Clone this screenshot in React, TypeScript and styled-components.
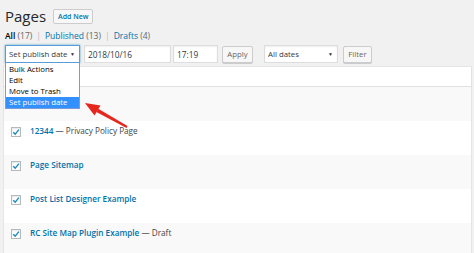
import styled, { createGlobalStyle } from "styled-components";

const GlobalStyle = createGlobalStyle`
  html, body {
    margin: 0;
    padding: 0;
    background: #f1f1f1;
    font-family: "Open Sans", "Noto Sans", sans-serif;
    color: #444;
  }
`;

const Screen = styled.div`
  position: relative;
  width: 474px;
  height: 253px;
  overflow: hidden;
  background: #f1f1f1;
`;

const Top = styled.div`
  padding: 8px 0 0 5px;
  height: 58px;
  box-sizing: border-box;
`;

const TitleRow = styled.div`
  display: flex;
  align-items: center;
  gap: 7px;
`;

const Heading = styled.h1`
  margin: 0;
  font-size: 15px;
  font-weight: 400;
  line-height: 16px;
  color: #23282d;
`;

const AddNew = styled.button`
  height: 15px;
  padding: 0 4px;
  border: 1px solid #ccc;
  border-radius: 2px;
  background: #f7f7f7;
  color: #0073aa;
  font-family: inherit;
  font-size: 7px;
  font-weight: 600;
  line-height: 13px;
`;

const Views = styled.div`
  margin-top: 7px;
  font-size: 8.5px;
  line-height: 10px;
  color: #666;
  white-space: nowrap;
`;

const ViewLink = styled.span<{ $current?: boolean }>`
  color: ${(p) => (p.$current ? "#000" : "#0073aa")};
  font-weight: ${(p) => (p.$current ? 600 : 400)};
`;

const Sep = styled.span`
  color: #bbb;
  margin: 0 4px;
`;

const Nav = styled.div`
  display: flex;
  align-items: center;
  height: 18px;
  padding-left: 5px;
  margin-top: -13px;
`;

const SelectWrap = styled.div`
  position: relative;
`;

const Select = styled.div<{ $w: number; $focus?: boolean }>`
  width: ${(p) => p.$w}px;
  height: 18px;
  box-sizing: border-box;
  display: flex;
  align-items: center;
  justify-content: space-between;
  padding: 0 4px 0 3px;
  background: #fff;
  border: 1px solid ${(p) => (p.$focus ? "#5b9dd9" : "#ddd")};
  box-shadow: ${(p) => (p.$focus ? "0 0 2px rgba(30,140,190,.8)" : "inset 0 1px 2px rgba(0,0,0,.07)")};
  font-size: 7.8px;
  color: #32373c;
  white-space: nowrap;
`;

const Caret = styled.span`
  font-size: 5px;
  color: #333;
`;

const Input = styled.div<{ $w: number; $ml: number }>`
  width: ${(p) => p.$w}px;
  margin-left: ${(p) => p.$ml}px;
  height: 18px;
  box-sizing: border-box;
  display: flex;
  align-items: center;
  padding: 0 3px;
  background: #fff;
  border: 1px solid #ddd;
  box-shadow: inset 0 1px 2px rgba(0,0,0,.07);
  font-size: 8.3px;
  color: #32373c;
`;

const Button = styled.button<{ $ml: number; $w: number }>`
  margin-left: ${(p) => p.$ml}px;
  width: ${(p) => p.$w}px;
  height: 17px;
  padding: 0;
  background: #f7f7f7;
  border: 1px solid #ccc;
  border-radius: 2px;
  box-shadow: 0 1px 0 #ccc;
  font-family: inherit;
  font-size: 7.8px;
  color: #666;
`;

const SelectGap = styled.div`
  margin-left: 11px;
`;

const Menu = styled.ul`
  position: absolute;
  left: 0;
  top: 18px;
  width: 75px;
  margin: 0;
  padding: 1px 0 0;
  list-style: none;
  background: #fff;
  border: 1px solid #7a9cd3;
  border-top: none;
  box-sizing: border-box;
  z-index: 3;
`;

const MenuItem = styled.li<{ $active?: boolean }>`
  height: 11px;
  line-height: 11px;
  padding-left: 3px;
  font-size: 7.8px;
  white-space: nowrap;
  color: ${(p) => (p.$active ? "#fff" : "#000")};
  background: ${(p) => (p.$active ? "#3390ff" : "transparent")};
`;

const Table = styled.div`
  margin: 3px 2px 0 3px;
  border: 1px solid #e5e5e5;
  background: #fff;
`;

const Head = styled.div`
  height: 19px;
  border-bottom: 1px solid #e1e1e1;
  box-shadow: 0 1px 2px rgba(0,0,0,.04);
`;

const Row = styled.div<{ $alt?: boolean }>`
  height: 34px;
  box-sizing: border-box;
  display: flex;
  align-items: flex-start;
  gap: 9px;
  padding: 5px 0 0 7px;
  background: ${(p) => (p.$alt ? "#f9f9f9" : "#fff")};
`;

const Check = styled.span`
  margin-top: 1px;
  width: 8px;
  height: 8px;
  border: 1px solid #b4b9be;
  background: #fff;
  box-shadow: inset 0 1px 2px rgba(0,0,0,.1);
  display: flex;
  align-items: center;
  justify-content: center;
`;

const Title = styled.span`
  font-size: 8.2px;
  line-height: 10px;
  font-weight: 600;
  color: #0073aa;
`;

const State = styled.span`
  font-weight: 400;
  color: #444;
`;

const Pointer = styled.svg`
  position: absolute;
  left: 80px;
  top: 98px;
  z-index: 4;
`;

const rows = [
  { title: "", state: "" },
  { title: "12344", state: " — Privacy Policy Page" },
  { title: "Page Sitemap", state: "" },
  { title: "Post List Designer Example", state: "" },
  { title: "RC Site Map Plugin Example", state: " — Draft" },
];

const Tick = () => (
  <svg width="8" height="8" viewBox="0 0 8 8">
    <path d="M1.2 4.2 L3.2 6.1 L6.9 1.6" fill="none" stroke="#1e8cbe" strokeWidth="1.4" />
  </svg>
);

export default function App() {
  return (
    <Screen>
      <GlobalStyle />
      <Top>
        <TitleRow>
          <Heading>Pages</Heading>
          <AddNew>Add New</AddNew>
        </TitleRow>
        <Views>
          <ViewLink $current>All</ViewLink> (17)<Sep>|</Sep>
          <ViewLink>Published</ViewLink> (13)<Sep>|</Sep>
          <ViewLink>Drafts</ViewLink> (4)
        </Views>
      </Top>
      <Nav>
        <SelectWrap>
          <Select $w={75} $focus>
            Set publish date <Caret>▼</Caret>
          </Select>
          <Menu>
            <MenuItem>Bulk Actions</MenuItem>
            <MenuItem>Edit</MenuItem>
            <MenuItem>Move to Trash</MenuItem>
            <MenuItem $active>Set publish date</MenuItem>
          </Menu>
        </SelectWrap>
        <Input $w={87} $ml={4}>2018/10/16</Input>
        <Input $w={45} $ml={2}>17:19</Input>
        <Button $ml={4} $w={31}>Apply</Button>
        <SelectGap>
          <Select $w={74}>
            All dates <Caret>▼</Caret>
          </Select>
        </SelectGap>
        <Button $ml={5} $w={29}>Filter</Button>
      </Nav>
      <Table>
        <Head />
        {rows.map((r, i) => (
          <Row key={i} $alt={i % 2 === 0}>
            {r.title && (
              <>
                <Check>
                  <Tick />
                </Check>
                <Title>
                  {r.title}
                  <State>{r.state}</State>
                </Title>
              </>
            )}
          </Row>
        ))}
      </Table>
      <Pointer width="52" height="34" viewBox="0 0 52 34">
        <polygon points="5,5 14.5,17.5 20.5,7.5" fill="#e5271d" />
        <polygon points="16.4,14 18.2,10.8 47.5,28.1 46.5,29.9" fill="#e5271d" />
      </Pointer>
    </Screen>
  );
}
